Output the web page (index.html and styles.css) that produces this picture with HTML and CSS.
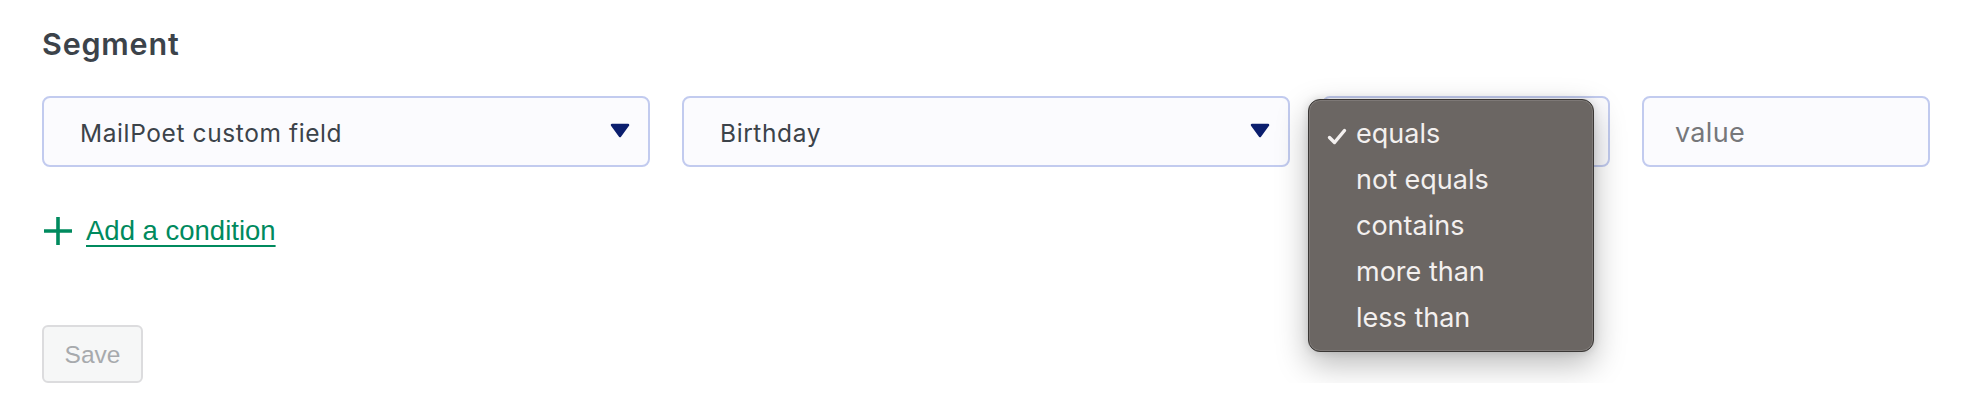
FILE: index.html
```html
<!DOCTYPE html>
<html>
<head>
<meta charset="utf-8">
<link rel="stylesheet" href="styles.css">
</head>
<body>
<div class="page">
  <h2 class="title">Segment</h2>
  <div class="row">
    <div class="field field-wide">
      <span class="field-text">MailPoet custom field</span>
      <svg class="caret" width="20" height="15" viewBox="0 0 20 15"><path d="M2 2 H18 L10 13 Z" fill="#0b1e6e" stroke="#0b1e6e" stroke-width="2.5" stroke-linejoin="round"/></svg>
    </div>
    <div class="field field-wide">
      <span class="field-text">Birthday</span>
      <svg class="caret" width="20" height="15" viewBox="0 0 20 15"><path d="M2 2 H18 L10 13 Z" fill="#0b1e6e" stroke="#0b1e6e" stroke-width="2.5" stroke-linejoin="round"/></svg>
    </div>
    <div class="field field-narrow has-menu">
      <ul class="menu">
        <li class="menu-item selected">
          <svg class="check" width="20" height="17" viewBox="0 0 20 17"><path d="M2.5 9.5 L7.5 14.5 L17.5 2.5" fill="none" stroke="#f3f0ef" stroke-width="3.4" stroke-linecap="round" stroke-linejoin="round"/></svg>
          equals
        </li>
        <li class="menu-item">not equals</li>
        <li class="menu-item">contains</li>
        <li class="menu-item">more than</li>
        <li class="menu-item">less than</li>
      </ul>
    </div>
    <div class="field field-narrow field-input">
      <span class="placeholder">value</span>
    </div>
  </div>
  <div class="add-row">
    <svg class="plus" width="28" height="28" viewBox="0 0 28 28"><path d="M14 0 V28 M0 14 H28" stroke="#008a5e" stroke-width="3.6"/></svg>
    <a class="add-link" href="#">Add a condition</a>
  </div>
  <button class="save" disabled>Save</button>
</div>
</body>
</html>
```
FILE: styles.css
```css
html, body {
  margin: 0;
  padding: 0;
  background: #ffffff;
}

.page {
  padding: 26px 0 0 42px;
  font-family: Inter, "Noto Sans", sans-serif;
  color: #3c434a;
}

.title {
  margin: 0;
  font-size: 30.5px;
  line-height: 36px;
  font-weight: 600;
  color: #3c434a;
  letter-spacing: 0.8px;
}

.row {
  display: flex;
  gap: 32px;
  margin-top: 34px;
}

.field {
  position: relative;
  box-sizing: border-box;
  height: 71px;
  border: 2px solid #c2cbef;
  border-radius: 8px;
  background: #fbfbfe;
  display: flex;
  align-items: center;
  justify-content: space-between;
  padding: 2px 18px 0 36px;
}

.field-wide {
  width: 608px;
}

.field-narrow {
  width: 288px;
}

.field-input {
  padding-left: 31px;
}

.field-text {
  font-size: 24.5px;
  letter-spacing: 0.6px;
  color: #3c434a;
}

.placeholder {
  font-size: 27px;
  letter-spacing: 0.3px;
  color: #76777a;
}

.caret {
  display: block;
  margin-top: -4px;
}

.menu {
  position: absolute;
  left: -16px;
  top: 1px;
  width: 286px;
  height: 253px;
  box-sizing: border-box;
  margin: 0;
  padding: 11px 0 0 0;
  list-style: none;
  background: #6b6663;
  border: 1px solid #3a3735;
  border-radius: 12px;
  box-shadow: inset 0 0 0 1px rgba(255, 255, 255, 0.12), 0 12px 32px rgba(0, 0, 0, 0.28), 0 0 8px rgba(0, 0, 0, 0.12);
  z-index: 10;
}

.menu-item {
  position: relative;
  height: 46px;
  line-height: 46px;
  padding-left: 47px;
  font-size: 27px;
  color: #f3f0ef;
  white-space: nowrap;
}

.check {
  position: absolute;
  left: 18px;
  top: 17px;
}

.add-row {
  display: flex;
  align-items: center;
  gap: 14px;
  margin-top: 49px;
  height: 30px;
  padding-left: 2px;
}

.plus {
  display: block;
}

.add-link {
  font-family: "Liberation Sans", Arial, sans-serif;
  font-size: 27.5px;
  line-height: 30px;
  color: #008a5e;
  text-decoration: underline;
  text-decoration-thickness: 2px;
  text-underline-offset: 5px;
}

.save {
  display: block;
  margin-top: 79px;
  box-sizing: border-box;
  width: 101px;
  height: 58px;
  padding: 2px 0 0 0;
  background: #f6f7f7;
  border: 2px solid #dcdcde;
  border-radius: 6px;
  font-family: "Liberation Sans", Arial, sans-serif;
  font-size: 24.5px;
  color: #a7aaad;
}
```
